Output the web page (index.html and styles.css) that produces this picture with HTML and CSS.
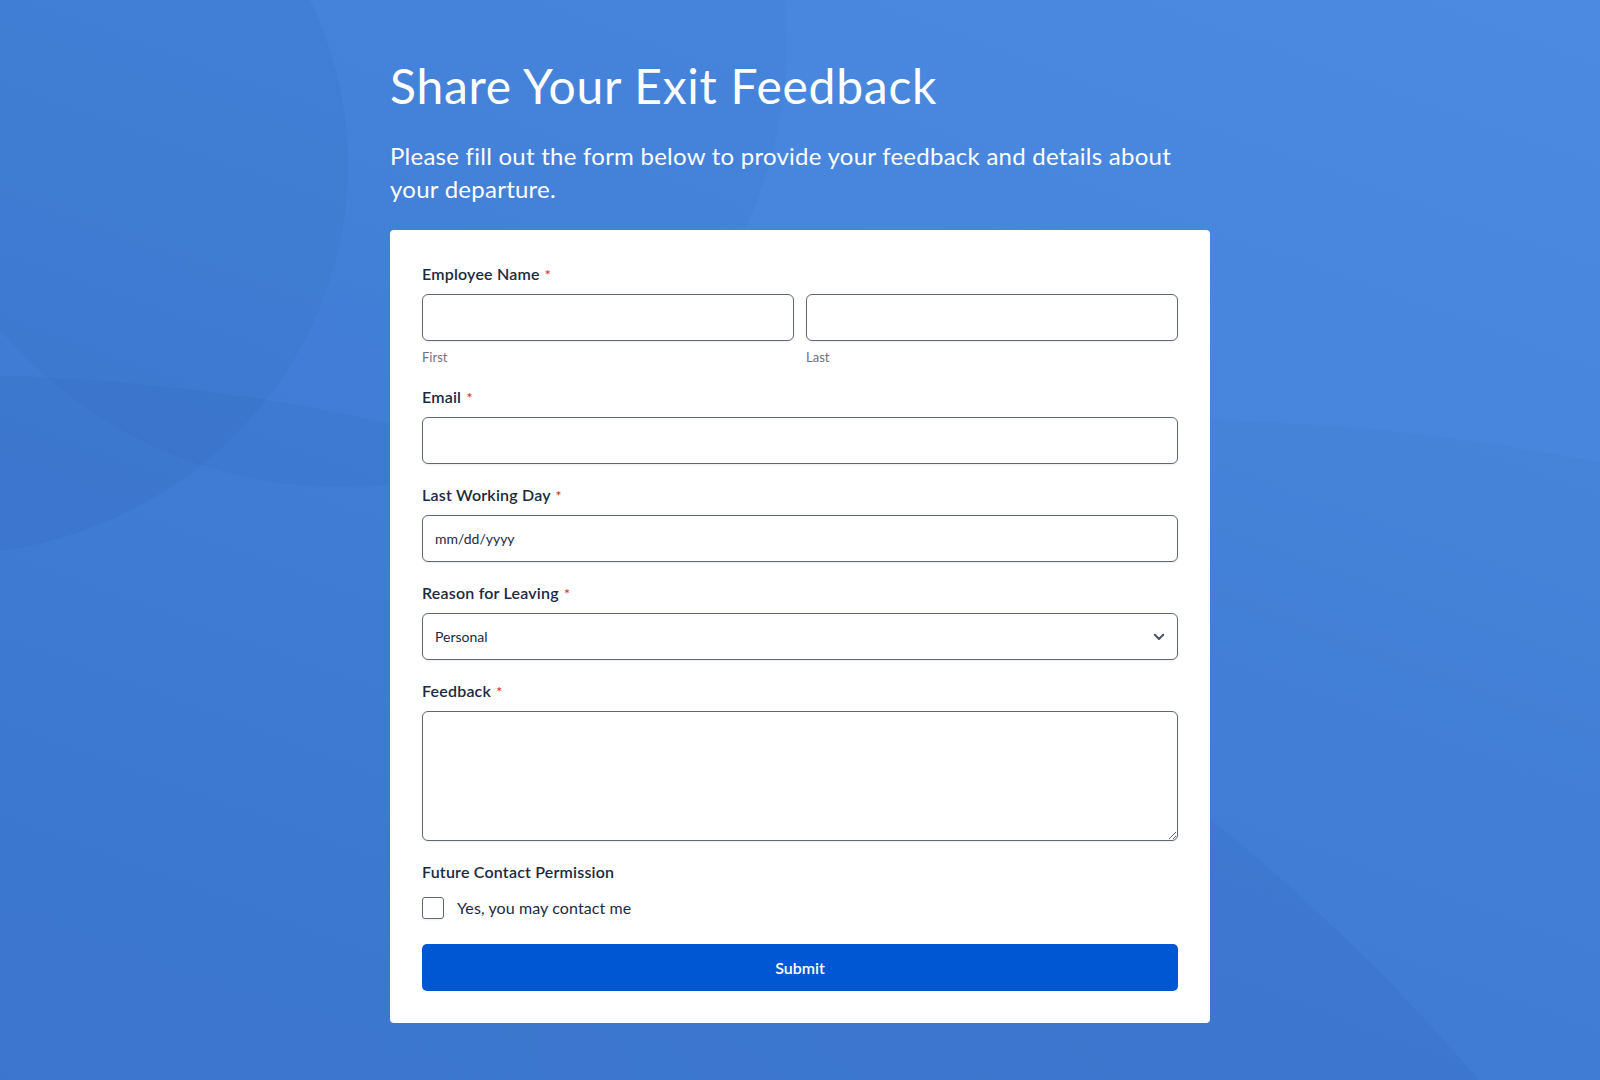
FILE: index.html
```html
<!DOCTYPE html>
<html lang="en">
<head>
<meta charset="utf-8">
<title>Share Your Exit Feedback</title>
<link rel="stylesheet" href="styles.css">
</head>
<body>
<div class="decor" aria-hidden="true">
  <div class="blob blob-a"></div>
  <div class="blob blob-b"></div>
  <div class="blob blob-c"></div>
  <div class="blob blob-d"></div>
</div>
<main class="page">
  <h1 class="title">Share Your Exit Feedback</h1>
  <p class="subtitle">Please fill out the form below to provide your feedback and details about your departure.</p>
  <form class="card">
    <div class="field">
      <label class="label">Employee Name <span class="req">*</span></label>
      <div class="name-row">
        <div class="name-col">
          <input class="input" type="text">
          <span class="sublabel">First</span>
        </div>
        <div class="name-col">
          <input class="input" type="text">
          <span class="sublabel">Last</span>
        </div>
      </div>
    </div>
    <div class="field">
      <label class="label">Email <span class="req">*</span></label>
      <input class="input" type="email">
    </div>
    <div class="field">
      <label class="label">Last Working Day <span class="req">*</span></label>
      <input class="input" type="text" placeholder="mm/dd/yyyy">
    </div>
    <div class="field">
      <label class="label">Reason for Leaving <span class="req">*</span></label>
      <div class="select-wrap">
        <select class="input select">
          <option>Personal</option>
          <option>Career Growth</option>
          <option>Relocation</option>
          <option>Other</option>
        </select>
        <svg class="chev" width="12" height="8" viewBox="0 0 12 8"><path d="M1.8 1.8 L6 6 L10.2 1.8" fill="none" stroke="#4b5563" stroke-width="2" stroke-linecap="round" stroke-linejoin="round"/></svg>
      </div>
    </div>
    <div class="field">
      <label class="label">Feedback <span class="req">*</span></label>
      <textarea class="input textarea"></textarea>
    </div>
    <div class="field field-check">
      <span class="label">Future Contact Permission</span>
      <label class="check-row">
        <input class="checkbox" type="checkbox">
        <span class="check-text">Yes, you may contact me</span>
      </label>
    </div>
    <button class="submit" type="button">Submit</button>
  </form>
</main>
</body>
</html>
```

FILE: styles.css
```css
* { box-sizing: border-box; }

html, body { height: 100%; }

body {
  margin: 0;
  font-family: "Lato", "Noto Sans", sans-serif;
  background: linear-gradient(200deg, #4b8ae0 0%, #4785dc 35%, #427ed7 65%, #3e79d1 100%);
  color: #1b2a41;
  overflow: hidden;
  position: relative;
}

.decor {
  position: absolute;
  inset: 0;
  overflow: hidden;
  pointer-events: none;
}

.blob {
  position: absolute;
  border-radius: 50%;
}

/* top-left disc */
.blob-a {
  left: -464px;
  top: -225px;
  width: 812px;
  height: 780px;
  background: rgba(10, 40, 120, 0.045);
}

/* shape behind the title */
.blob-b {
  left: -107px;
  top: -407px;
  width: 894px;
  height: 894px;
  background: rgba(10, 40, 120, 0.03);
}

/* large lower sweep */
.blob-c {
  left: -2060px;
  top: 375px;
  width: 4020px;
  height: 4020px;
  background: rgba(10, 40, 120, 0.035);
}

/* right band, fading out towards the left */
.blob-d {
  left: -50px;
  top: 419px;
  width: 2400px;
  height: 1200px;
  background: linear-gradient(to right, rgba(10, 40, 120, 0) 0px, rgba(10, 40, 120, 0) 500px, rgba(10, 40, 120, 0.035) 1250px);
}

.page {
  position: relative;
  width: 820px;
  margin: 0 auto;
  padding-top: 57px;
}

.title {
  margin: 0;
  font-size: 48px;
  font-weight: 400;
  letter-spacing: 0.75px;
  line-height: 58px;
  color: #ffffff;
}

.subtitle {
  margin: 24px 0 25px;
  font-size: 24px;
  font-weight: 400;
  letter-spacing: 0.25px;
  line-height: 33px;
  color: #ffffff;
}

.card {
  background: #ffffff;
  border-radius: 4px;
  padding: 32px;
}

.field {
  margin-bottom: 19px;
}

.label {
  display: block;
  font-size: 16px;
  font-weight: 600;
  letter-spacing: 0.2px;
  line-height: 24px;
  margin-bottom: 7px;
  color: #1b2a41;
}

.req {
  color: #d23b2a;
  font-size: 14px;
  margin-left: 1px;
}

.name-row {
  display: grid;
  grid-template-columns: 1fr 1fr;
  column-gap: 12px;
}

.name-col {
  display: flex;
  flex-direction: column;
}

.sublabel {
  margin-top: 7px;
  font-size: 13px;
  line-height: 18px;
  color: #6b7280;
}

.input {
  display: block;
  width: 100%;
  height: 47px;
  padding: 0 12px;
  border: 1px solid #5f6878;
  border-radius: 6px;
  background: #ffffff;
  font-family: inherit;
  font-size: 14px;
  color: #1b2a41;
  box-shadow: 0 1px 2px rgba(16, 24, 40, 0.08);
  outline: none;
}

.input::placeholder {
  color: #1b2a41;
  opacity: 1;
}

.select-wrap {
  position: relative;
}

.select {
  appearance: none;
  -webkit-appearance: none;
  padding-right: 36px;
}

.chev {
  position: absolute;
  right: 13px;
  top: 20px;
}

.textarea {
  height: 130px;
  padding: 12px;
  resize: vertical;
}

.field-check .label {
  margin-bottom: 8px;
}

.check-row {
  display: flex;
  align-items: center;
  gap: 13px;
  height: 32px;
  cursor: pointer;
}

.checkbox {
  appearance: none;
  -webkit-appearance: none;
  margin: 0;
  width: 22px;
  height: 22px;
  border: 1px solid #5f6878;
  border-radius: 3px;
  background: #ffffff;
  box-shadow: 0 1px 2px rgba(16, 24, 40, 0.08);
}

.check-text {
  font-size: 16px;
  letter-spacing: 0.1px;
  line-height: 24px;
  color: #1b2a41;
}

.submit {
  display: block;
  width: 100%;
  height: 47px;
  margin-top: 20px;
  border: none;
  border-radius: 5px;
  background: #0057d4;
  color: #ffffff;
  font-family: inherit;
  font-size: 16px;
  font-weight: 600;
  cursor: pointer;
}
```
